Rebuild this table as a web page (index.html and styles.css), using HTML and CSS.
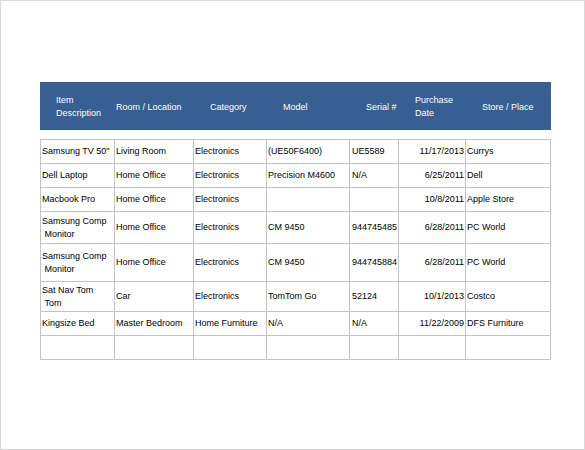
FILE: index.html
```html
<!DOCTYPE html>
<html>
<head>
<meta charset="utf-8">
<link rel="stylesheet" href="styles.css">
</head>
<body>
<div class="page">
  <div class="head grid">
    <div class="h c1">Item<br>Description</div>
    <div class="h c2">Room / Location</div>
    <div class="h c3">Category</div>
    <div class="h c4">Model</div>
    <div class="h c5">Serial #</div>
    <div class="h c6">Purchase<br>Date</div>
    <div class="h c7">Store / Place</div>
  </div>
  <div class="table grid">
    <div class="c">Samsung TV 50"</div><div class="c">Living Room</div><div class="c">Electronics</div><div class="c">(UE50F6400)</div><div class="c s">UE5589</div><div class="c d">11/17/2013</div><div class="c">Currys</div>
    <div class="c">Dell Laptop</div><div class="c">Home Office</div><div class="c">Electronics</div><div class="c">Precision M4600</div><div class="c s">N/A</div><div class="c d">6/25/2011</div><div class="c">Dell</div>
    <div class="c">Macbook Pro</div><div class="c">Home Office</div><div class="c">Electronics</div><div class="c"></div><div class="c s"></div><div class="c d">10/8/2011</div><div class="c">Apple Store</div>
    <div class="c">Samsung Comp<br>&nbsp;Monitor</div><div class="c">Home Office</div><div class="c">Electronics</div><div class="c">CM 9450</div><div class="c s">944745485</div><div class="c d">6/28/2011</div><div class="c">PC World</div>
    <div class="c">Samsung Comp<br>&nbsp;Monitor</div><div class="c">Home Office</div><div class="c">Electronics</div><div class="c">CM 9450</div><div class="c s">944745884</div><div class="c d">6/28/2011</div><div class="c">PC World</div>
    <div class="c">Sat Nav Tom<br>&nbsp;Tom</div><div class="c">Car</div><div class="c">Electronics</div><div class="c">TomTom Go</div><div class="c s">52124</div><div class="c d">10/1/2013</div><div class="c">Costco</div>
    <div class="c">Kingsize Bed</div><div class="c">Master Bedroom</div><div class="c">Home Furniture</div><div class="c">N/A</div><div class="c s">N/A</div><div class="c d">11/22/2009</div><div class="c">DFS Furniture</div>
    <div class="c"></div><div class="c"></div><div class="c"></div><div class="c"></div><div class="c s"></div><div class="c d"></div><div class="c"></div>
  </div>
</div>
</body>
</html>
```
FILE: styles.css
```css
html, body {
  margin: 0;
  padding: 0;
  background: #fff;
}
.page {
  width: 585px;
  height: 450px;
  box-sizing: border-box;
  border: 1px solid #d9d9d9;
  padding: 81px 0 0 39px;
  font-family: "Liberation Sans", Arial, sans-serif;
  font-size: 9px;
  line-height: 13px;
  color: #000;
}
.grid {
  display: grid;
  grid-template-columns: 73px 78px 72px 82px 48px 66px 84px;
  column-gap: 1px;
  width: 511px;
  box-sizing: border-box;
  padding: 0 1px;
}
.head {
  background: #375f92;
  height: 48px;
  align-items: center;
  color: #fff;
  margin-bottom: 9px;
  padding-top: 2px;
}
.h {
  white-space: nowrap;
  padding-left: 16px;
}
.head .c1 { padding-left: 15px; }
.head .c2 { padding-left: 1px; }
.table {
  background: #c4c4c4;
  padding: 1px;
  row-gap: 1px;
  grid-template-rows: 23px 23px 23px 31px 37px 29px 23px 23px;
}
.c {
  background: #fff;
  display: flex;
  align-items: center;
  padding-left: 1px;
  white-space: nowrap;
  overflow: hidden;
}
.c.s { padding-left: 2px; }
.c.d {
  justify-content: flex-end;
  padding-left: 0;
  padding-right: 1px;
}
```
